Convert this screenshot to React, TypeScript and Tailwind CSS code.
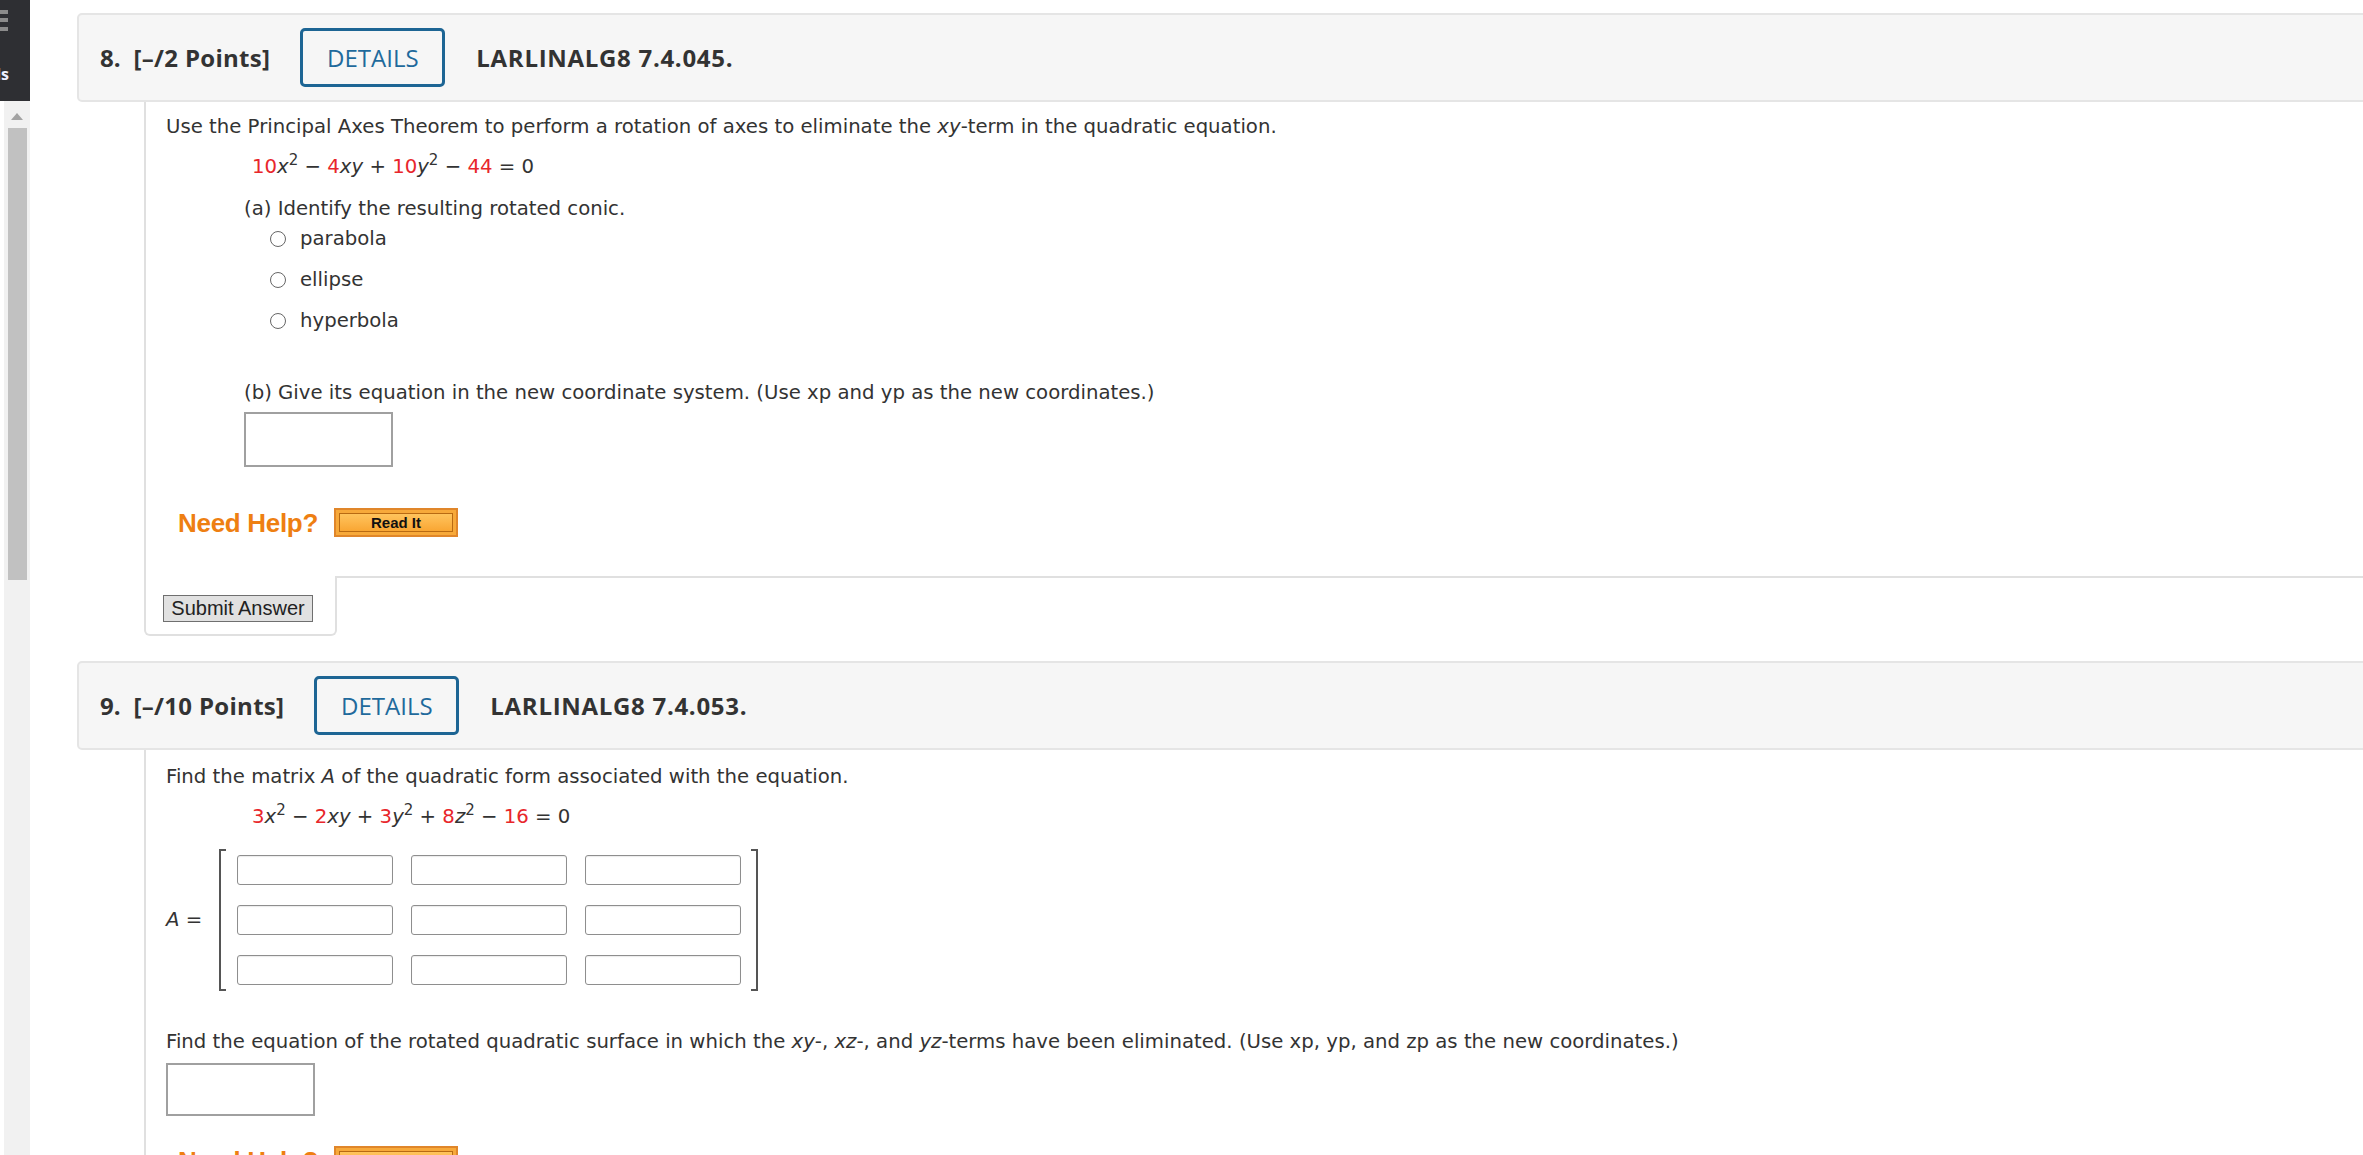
import React from 'react';

const body = { fontFamily: '"DejaVu Sans", Verdana, sans-serif' };
const head = { fontFamily: '"Open Sans", sans-serif' };
const arial = { fontFamily: '"Liberation Sans", Arial, sans-serif' };

function Red({ children }: { children: React.ReactNode }) {
  return <span className="text-[#e8262b]">{children}</span>;
}

function Sup({ children }: { children: React.ReactNode }) {
  return <sup className="text-[15px] relative -top-[8px]">{children}</sup>;
}

function QuestionHeader({ num, points, code }: { num: string; points: string; code: string }) {
  return (
    <div
      className="flex items-center h-[89px] bg-[#f6f6f6] border-2 border-[#e5e5e5] rounded-l-[5px] -mr-[12px] pl-[21px] text-[24px] text-[#333] font-bold"
      style={head}
    >
      <span>{num}</span>
      <span className="ml-[13px] tracking-[0.3px]">{points}</span>
      <div className="ml-[30px] w-[145px] h-[59px] border-[3px] border-[#1d6594] rounded-[5px] flex items-center justify-center text-[#1f6a9c] font-normal">
        DETAILS
      </div>
      <span className="ml-[31px] tracking-[0.7px]">{code}</span>
    </div>
  );
}

function NeedHelp() {
  return (
    <div className="flex items-center ml-[12px]" style={arial}>
      <span className="text-[26px] font-bold text-[#ee7f12] tracking-[-0.3px]">Need Help?</span>
      <div className="ml-[16px] w-[124px] h-[29px] bg-[#f7a93a] border-2 border-[#e0862a] p-[3px]">
        <div className="w-full h-full border border-[#b86a12] bg-gradient-to-b from-[#ffc45c] to-[#f9a632] flex items-center justify-center text-[15px] font-bold text-[#111]">
          Read It
        </div>
      </div>
    </div>
  );
}

function Radio({ label, className }: { label: string; className?: string }) {
  return (
    <div className={`flex items-center h-[24px] ml-[104px] ${className ?? ''}`}>
      <div className="w-[16px] h-[16px] rounded-full border border-[#666] bg-white" />
      <span className="ml-[14px]">{label}</span>
    </div>
  );
}

function MatrixInput() {
  return <div className="w-[156px] h-[30px] border border-[#8e8e8e] rounded-[3px] bg-white shadow-[inset_0_1px_1px_rgba(0,0,0,0.08)]" />;
}

function App() {
  return (
    <div className="flex w-full min-h-screen bg-white overflow-hidden text-[19.7px] text-[#333]" style={body}>
      {/* Left strip */}
      <aside className="w-[30px] shrink-0 flex flex-col min-h-screen">
        <div className="h-[101px] bg-[#2e2f33] relative overflow-hidden">
          <div className="absolute left-0 top-[10px] w-[8px] h-[4px] bg-[#8b8b8b]" />
          <div className="absolute left-0 top-[18px] w-[8px] h-[4px] bg-[#8b8b8b]" />
          <div className="absolute left-0 top-[27px] w-[8px] h-[4px] bg-[#8b8b8b]" />
          <div className="absolute right-[21px] top-[62px] text-[16px] font-bold text-[#eef0ff] whitespace-nowrap" style={head}>
            Tools
          </div>
        </div>
        <div className="flex-1 flex">
          <div className="w-[4px] bg-white" />
          <div className="flex-1 bg-[#f1f1f1] flex flex-col items-center">
            <div className="mt-[12px] w-0 h-0 border-l-[6px] border-r-[6px] border-b-[7px] border-l-transparent border-r-transparent border-b-[#a3a3a3]" />
            <div className="mt-[8px] w-[19px] h-[452px] bg-[#c1c1c1]" />
          </div>
        </div>
      </aside>

      {/* Main */}
      <main className="flex-1 pl-[47px] pt-[13px] pb-[40px]">
        {/* Question 8 */}
        <QuestionHeader num="8." points="[–/2 Points]" code="LARLINALG8 7.4.045." />
        <div className="ml-[67px]">
          <div className="border-l-2 border-[#e0e0e0] pl-[20px] pt-[13px] pb-[39px] leading-[24px]">
            <p>
              Use the Principal Axes Theorem to perform a rotation of axes to eliminate the <i>xy</i>-term in the quadratic equation.
            </p>
            <p className="mt-[16px] ml-[86px]">
              <Red>10</Red><i>x</i><Sup>2</Sup> − <Red>4</Red><i>xy</i> + <Red>10</Red><i>y</i><Sup>2</Sup> − <Red>44</Red> = 0
            </p>
            <p className="mt-[18px] ml-[78px]">(a) Identify the resulting rotated conic.</p>
            <Radio label="parabola" className="mt-[6px]" />
            <Radio label="ellipse" className="mt-[17px]" />
            <Radio label="hyperbola" className="mt-[17px]" />
            <p className="mt-[48px] ml-[78px]">
              (b) Give its equation in the new coordinate system. (Use xp and yp as the new coordinates.)
            </p>
            <div className="mt-[7px] ml-[78px] w-[149px] h-[55px] border-2 border-[#a0a0a0] bg-white" />
            <div className="mt-[41px]">
              <NeedHelp />
            </div>
          </div>
          <div className="flex">
            <div className="w-[193px] h-[60px] border-l-2 border-r-2 border-b-2 border-[#e0e0e0] rounded-b-[6px] pl-[17px] pt-[18px]">
              <button
                className="w-[150px] h-[27px] bg-[#e1e1e1] border border-[#6f6f6f] text-[20px] text-[#222] leading-none"
                style={arial}
              >
                Submit Answer
              </button>
            </div>
            <div className="flex-1 border-t-2 border-[#e0e0e0]" />
          </div>
        </div>

        {/* Question 9 */}
        <div className="mt-[25px]">
          <QuestionHeader num="9." points="[–/10 Points]" code="LARLINALG8 7.4.053." />
        </div>
        <div className="ml-[67px]">
          <div className="border-l-2 border-[#e0e0e0] pl-[20px] pt-[15px] pb-[40px] leading-[24px]">
            <p>
              Find the matrix <i>A</i> of the quadratic form associated with the equation.
            </p>
            <p className="mt-[16px] ml-[86px]">
              <Red>3</Red><i>x</i><Sup>2</Sup> − <Red>2</Red><i>xy</i> + <Red>3</Red><i>y</i><Sup>2</Sup> + <Red>8</Red><i>z</i><Sup>2</Sup> − <Red>16</Red> = 0
            </p>
            <div className="mt-[20px] flex items-center">
              <span className="w-[53px]"><i>A</i> =</span>
              <div className="w-[7px] h-[142px] border-l-2 border-t-2 border-b-2 border-[#555]" />
              <div className="ml-[11px] grid grid-cols-[156px_156px_156px] gap-x-[18px] gap-y-[20px]">
                {Array.from({ length: 9 }).map((_, i) => (
                  <MatrixInput key={i} />
                ))}
              </div>
              <div className="ml-[10px] w-[7px] h-[142px] border-r-2 border-t-2 border-b-2 border-[#555]" />
            </div>
            <p className="mt-[39px]">
              Find the equation of the rotated quadratic surface in which the <i>xy</i>-, <i>xz</i>-, and <i>yz</i>-terms have been eliminated. (Use xp, yp, and zp as the new coordinates.)
            </p>
            <div className="mt-[9px] w-[149px] h-[53px] border-2 border-[#a0a0a0] bg-white" />
            <div className="mt-[30px]">
              <NeedHelp />
            </div>
          </div>
        </div>
      </main>
    </div>
  );
}

export default App;
